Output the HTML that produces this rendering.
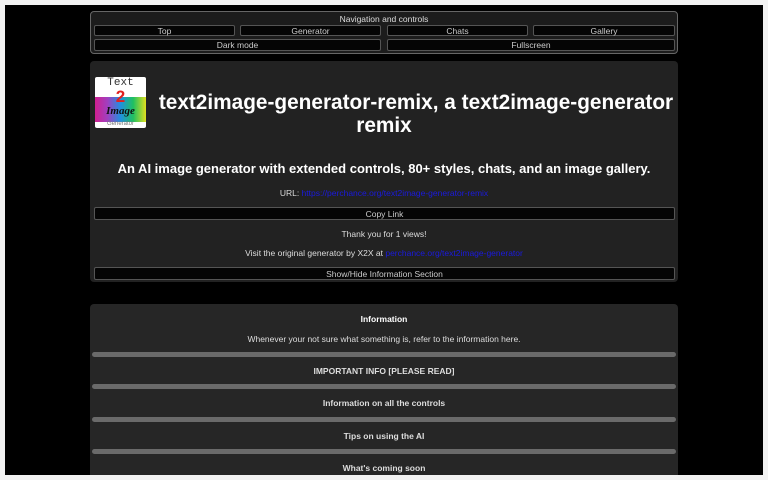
<!DOCTYPE html><html><head><style>
*{margin:0;padding:0;box-sizing:border-box}
html,body{width:768px;height:480px;overflow:hidden}
body{background:#f2f2f2;font-family:"Liberation Sans",sans-serif;position:relative}
.bg{position:absolute;left:5px;top:5px;width:758px;height:470px;background:#000}
.a{position:absolute}
.c{position:absolute;text-align:center;color:#ddd;font-size:8.5px;white-space:nowrap}
.btn{position:absolute;background:#050505;border:1px solid #555;border-radius:2px;color:#ccc;font-size:8.5px;text-align:center;line-height:10px}
.bar{position:absolute;left:92px;width:584px;height:5px;background:#6a6a6a;border-radius:3px}
a{color:#1a1adf}
</style></head><body>
<div class="bg"></div>
<div class="a" style="left:90px;top:11px;width:588px;height:43px;background:#1c1c1c;border:1px solid #666;border-radius:4px"></div>
<div class="c" style="left:90px;width:588px;top:14px">Navigation and controls</div>
<div class="btn" style="left:94px;top:25px;width:141px;height:11px">Top</div>
<div class="btn" style="left:240px;top:25px;width:141px;height:11px">Generator</div>
<div class="btn" style="left:387px;top:25px;width:141px;height:11px">Chats</div>
<div class="btn" style="left:533px;top:25px;width:142px;height:11px">Gallery</div>
<div class="btn" style="left:94px;top:39px;width:287px;height:12px">Dark mode</div>
<div class="btn" style="left:387px;top:39px;width:288px;height:12px">Fullscreen</div>

<div class="a" style="left:90px;top:61px;width:588px;height:221px;background:#222;border-radius:4px"></div>
<div class="a" style="left:95px;top:77px;width:51px;height:51px;background:#fff;border-radius:2px;overflow:hidden">
<div class="a" style="left:0;top:20px;width:51px;height:25px;background:linear-gradient(90deg,#d02090,#a040c0,#2090e0,#20c060,#e0e020)"></div>
<div class="c" style="left:0;width:51px;top:0;color:#333;font-size:11px;font-family:'Liberation Mono',monospace">Text</div>
<div class="c" style="left:0;width:51px;top:10px;color:#e02020;font-size:17px;font-weight:bold">2</div>
<div class="c" style="left:0;width:51px;top:28px;color:#111;font-size:11px;font-style:italic;font-family:'Liberation Serif',serif;font-weight:bold">Image</div>
<div class="c" style="left:0;width:51px;top:44px;color:#777;font-size:6px">Generator</div>
</div>
<div class="c" style="left:158px;width:516px;top:91px;font-size:20.8px;font-weight:bold;color:#fff">text2image-generator-remix, a text2image-generator</div>
<div class="c" style="left:90px;width:588px;top:114px;font-size:20.8px;font-weight:bold;color:#fff">remix</div>
<div class="c" style="left:90px;width:588px;top:161px;font-size:13px;font-weight:bold;color:#fff">An AI image generator with extended controls, 80+ styles, chats, and an image gallery.</div>
<div class="c" style="left:90px;width:588px;top:188px">URL: <a>https://perchance.org/text2image-generator-remix</a></div>
<div class="btn" style="left:94px;top:207px;width:581px;height:13px;line-height:12px">Copy Link</div>
<div class="c" style="left:90px;width:588px;top:229px">Thank you for 1 views!</div>
<div class="c" style="left:90px;width:588px;top:248px">Visit the original generator by X2X at <a>perchance.org/text2image-generator</a></div>
<div class="btn" style="left:94px;top:267px;width:581px;height:13px;line-height:12px">Show/Hide Information Section</div>

<div class="a" style="left:90px;top:304px;width:588px;height:171px;background:#262626;border-radius:4px 4px 0 0"></div>
<div class="c" style="left:90px;width:588px;top:314px;font-weight:bold;color:#fff">Information</div>
<div class="c" style="left:90px;width:588px;top:334px">Whenever your not sure what something is, refer to the information here.</div>
<div class="bar" style="top:352px"></div>
<div class="c" style="left:90px;width:588px;top:366px;font-weight:bold;color:#ddd">IMPORTANT INFO [PLEASE READ]</div>
<div class="bar" style="top:384px"></div>
<div class="c" style="left:90px;width:588px;top:398px;font-weight:bold;color:#ddd">Information on all the controls</div>
<div class="bar" style="top:417px"></div>
<div class="c" style="left:90px;width:588px;top:431px;font-weight:bold;color:#ddd">Tips on using the AI</div>
<div class="bar" style="top:449px"></div>
<div class="c" style="left:90px;width:588px;top:463px;font-weight:bold;color:#ddd">What's coming soon</div>
<div class="a" style="left:0;top:475px;width:768px;height:5px;background:#f2f2f2"></div>
</body></html>
